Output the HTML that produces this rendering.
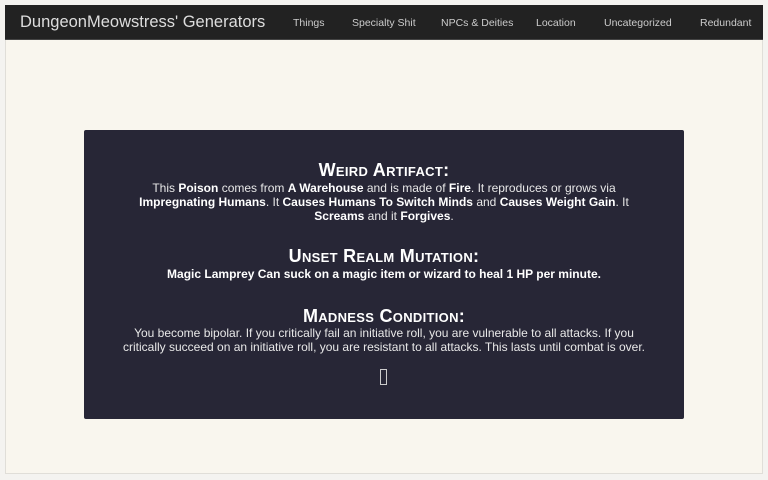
<!DOCTYPE html>
<html><head><meta charset="utf-8"><style>
html,body{margin:0;padding:0;}
body{width:768px;height:480px;background:#f4f3f0;position:relative;overflow:hidden;font-family:"Liberation Sans",sans-serif;}
.frame{position:absolute;left:5px;top:5px;width:758px;height:469px;background:#f9f6ee;border:1px solid #e0ded8;box-sizing:border-box;}
.nav{position:absolute;left:5px;top:5px;width:758px;height:34px;background:#222;border-bottom:1px solid #444;}
.brand{position:absolute;left:15px;top:8px;color:#ddd;font-family:"Liberation Sans",sans-serif;font-size:16.5px;letter-spacing:0;}
.nav a{position:absolute;top:12px;color:#ccc;font-family:"Liberation Sans",sans-serif;font-size:10.5px;text-decoration:none;}
.card{position:absolute;left:84px;top:130px;width:600px;height:289px;background:#272636;border-radius:2px;color:#eee;text-align:center;}
h2{margin:0;font-size:18px;font-variant:small-caps;font-weight:bold;color:#fff;line-height:20px;letter-spacing:0.3px;}
p{margin:0;font-size:12px;line-height:14px;color:#e8e8e8;}
b{color:#fff;}
</style></head><body>
<div class="frame"></div>
<div class="nav">
<div class="brand">DungeonMeowstress' Generators</div>
<a style="left:288px">Things</a>
<a style="left:347px">Specialty Shit</a>
<a style="left:436px">NPCs &amp; Deities</a>
<a style="left:531px">Location</a>
<a style="left:599px">Uncategorized</a>
<a style="left:695px">Redundant</a>
</div>
<div class="card">
<h2 style="position:absolute;top:30px;left:0;right:0">Weird Artifact:</h2>
<p style="position:absolute;top:51px;left:40px;right:40px">This <b>Poison</b> comes from <b>A Warehouse</b> and is made of <b>Fire</b>. It reproduces or grows via <b>Impregnating Humans</b>. It <b>Causes Humans To Switch Minds</b> and <b>Causes Weight Gain</b>. It <b>Screams</b> and it <b>Forgives</b>.</p>
<h2 style="position:absolute;top:116px;left:0;right:0">Unset Realm Mutation:</h2>
<p style="position:absolute;top:137px;left:0;right:0"><b>Magic Lamprey Can suck on a magic item or wizard to heal 1 HP per minute.</b></p>
<h2 style="position:absolute;top:176px;left:0;right:0">Madness Condition:</h2>
<p style="position:absolute;top:196px;left:30px;right:30px">You become bipolar. If you critically fail an initiative roll, you are vulnerable to all attacks. If you critically succeed on an initiative roll, you are resistant to all attacks. This lasts until combat is over.</p>
<div style="position:absolute;top:239px;left:296px;width:5px;height:14px;border:1px solid #ccc;"></div>
</div>
</body></html>
